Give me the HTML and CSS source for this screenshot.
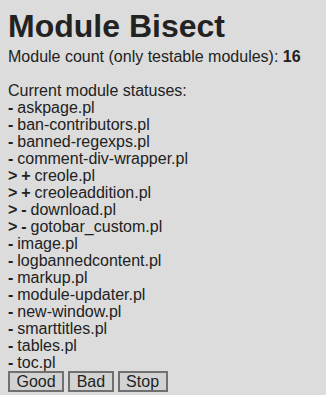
FILE: index.html
```html
<!DOCTYPE html>
<html lang="en">
<head>
<meta charset="utf-8">
<title>Module Bisect</title>
<link rel="stylesheet" href="styles.css">
</head>
<body>
<h1 class="title">Module Bisect</h1>
<p class="count">Module count (only testable modules): <b>16</b></p>
<p class="label">Current module statuses:</p>
<ul class="modules">
  <li><b class="mark">- </b>askpage.pl</li>
  <li><b class="mark">- </b>ban-contributors.pl</li>
  <li><b class="mark">- </b>banned-regexps.pl</li>
  <li><b class="mark">- </b>comment-div-wrapper.pl</li>
  <li><b class="mark">&gt; + </b>creole.pl</li>
  <li><b class="mark">&gt; + </b>creoleaddition.pl</li>
  <li><b class="mark">&gt; - </b>download.pl</li>
  <li><b class="mark">&gt; - </b>gotobar_custom.pl</li>
  <li><b class="mark">- </b>image.pl</li>
  <li><b class="mark">- </b>logbannedcontent.pl</li>
  <li><b class="mark">- </b>markup.pl</li>
  <li><b class="mark">- </b>module-updater.pl</li>
  <li><b class="mark">- </b>new-window.pl</li>
  <li><b class="mark">- </b>smarttitles.pl</li>
  <li><b class="mark">- </b>tables.pl</li>
  <li><b class="mark">- </b>toc.pl</li>
</ul>
<div class="actions">
  <button class="btn" type="button">Good</button>
  <button class="btn" type="button">Bad</button>
  <button class="btn" type="button">Stop</button>
</div>
</body>
</html>
```
FILE: styles.css
```css
html {
  background: #dcdcdc;
}
body {
  margin: 8px;
  font-family: "Liberation Sans", Arial, sans-serif;
  font-size: 16px;
  line-height: 17px;
  color: #222222;
  background: #dcdcdc;
}
.title {
  margin: 0 0 3px 0;
  font-size: 32px;
  line-height: normal;
  font-weight: bold;
}
.count {
  margin: 0 0 17px 0;
}
.label {
  margin: 0;
}
.modules {
  list-style: none;
  margin: 0;
  padding: 0;
}
.mark {
  word-spacing: -0.5px;
}
.actions {
  display: flex;
  gap: 4px;
}
.btn {
  font-family: "Liberation Sans", Arial, sans-serif;
  font-size: 16px;
  line-height: 17px;
  color: #222222;
  background: #d2d2d2;
  border: 2px solid #707070;
  border-radius: 0;
  padding: 0 6.5px;
  margin: 0;
}
```
